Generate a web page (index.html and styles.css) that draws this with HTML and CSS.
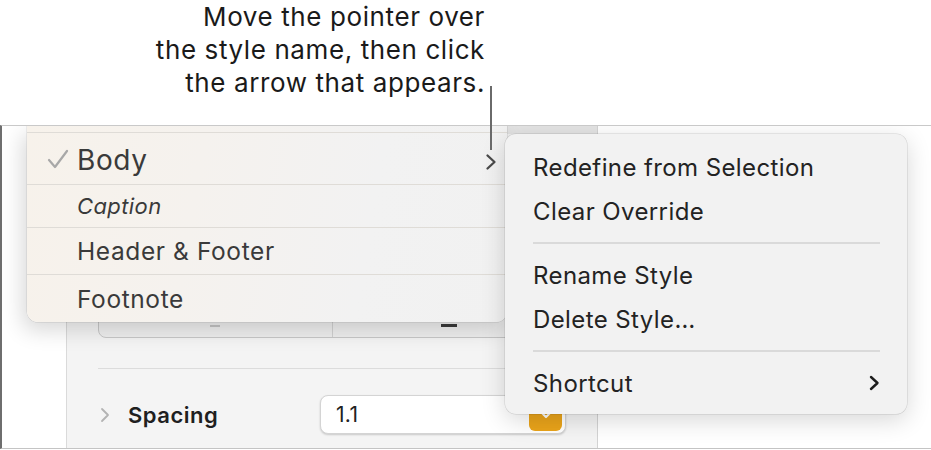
FILE: index.html
```html
<!DOCTYPE html>
<html lang="en">
<head>
<meta charset="utf-8">
<title>Style menu</title>
<link rel="stylesheet" href="styles.css">
</head>
<body>
<div class="page">
  <div class="callout">
    <p class="callout-text">Move the pointer over<br>the style name, then click<br>the arrow that appears.</p>
  </div>
  <div class="callout-line"></div>

  <div class="shot">
    <div class="inspector">
      <div class="stepper">
        <div class="stepper-half"><span class="dash dash-light"></span></div>
        <div class="stepper-half"><span class="dash dash-dark"></span></div>
      </div>
      <div class="rule"></div>
      <div class="spacing-row">
        <div class="spacing-label">
          <svg class="disclosure" width="10" height="16" viewBox="0 0 10 16"><path d="M2 2 L8 8 L2 14" fill="none" stroke="#b3b3b3" stroke-width="1.8" stroke-linecap="round" stroke-linejoin="round"/></svg>
          <span>Spacing</span>
        </div>
        <div class="field">
          <span class="field-value">1.1</span>
          <span class="field-btn">
            <svg width="14" height="9" viewBox="0 0 14 9"><path d="M2 2 L7 7 L12 2" fill="none" stroke="#fff" stroke-width="2.2" stroke-linecap="round" stroke-linejoin="round"/></svg>
          </span>
        </div>
      </div>
    </div>

    <div class="style-menu">
      <div class="style-row style-prev"></div>
      <div class="style-row style-body">
        <svg class="check" width="22" height="22" viewBox="0 0 22 22"><path d="M2 12 L8 19 L20 3" fill="none" stroke="#a8a8a8" stroke-width="2.2" stroke-linecap="round" stroke-linejoin="round"/></svg>
        <span class="style-name">Body</span>
        <svg class="row-arrow" width="12" height="18" viewBox="0 0 12 18"><path d="M2.5 2.5 L9.5 9 L2.5 15.5" fill="none" stroke="#4a4a4a" stroke-width="2.3" stroke-linecap="round" stroke-linejoin="round"/></svg>
      </div>
      <div class="style-row style-caption"><span class="style-name">Caption</span></div>
      <div class="style-row style-header"><span class="style-name">Header &amp; Footer</span></div>
      <div class="style-row style-footnote"><span class="style-name">Footnote</span></div>
    </div>

    <div class="submenu">
      <div class="sub-item">Redefine from Selection</div>
      <div class="sub-item">Clear Override</div>
      <div class="sub-sep"></div>
      <div class="sub-item">Rename Style</div>
      <div class="sub-item">Delete Style…</div>
      <div class="sub-sep"></div>
      <div class="sub-item sub-item-more">
        <span>Shortcut</span>
        <svg width="12" height="18" viewBox="0 0 12 18"><path d="M3 3 L9.5 9 L3 15" fill="none" stroke="#1e1e1e" stroke-width="2.4" stroke-linecap="round" stroke-linejoin="round"/></svg>
      </div>
    </div>
  </div>
</div>
</body>
</html>
```

FILE: styles.css
```css
* { box-sizing: border-box; }

html, body {
  margin: 0;
  padding: 0;
  background: #ffffff;
}

body {
  font-family: "Inter", "Liberation Sans", sans-serif;
  color: #1f1f1f;
  width: 931px;
  height: 450px;
  overflow: hidden;
}

.page {
  position: relative;
  width: 931px;
  height: 450px;
}

/* ---------- callout ---------- */
.callout {
  height: 125px;
  display: flex;
  justify-content: flex-start;
}

.callout-text {
  margin: 0;
  width: 485px;
  padding-top: 0;
  text-align: right;
  font-size: 26px;
  line-height: 33px;
  color: #1a1a1a;
  letter-spacing: 0.6px;
}

.callout-line {
  position: absolute;
  left: 490px;
  top: 86px;
  width: 2px;
  height: 64px;
  background: #6a6a6a;
  z-index: 5;
}

/* ---------- screenshot frame ---------- */
.shot {
  position: relative;
  height: 324px;
  border-top: 1px solid #c9c9c9;
  border-left: 2px solid #6e6e6e;
  border-bottom: 1px solid #c4c4c4;
  overflow: hidden;
  background: #ffffff;
}

.inspector {
  margin-left: 64px;
  width: 532px;
  height: 100%;
  background: linear-gradient(#e4e4e4 0, #e4e4e4 8px, #f4f4f4 8px);
  border-left: 1px solid #dadada;
  border-right: 1px solid #d3d3d3;
  padding: 154px 31px 0 31px;
  display: flex;
  flex-direction: column;
}

.stepper {
  height: 58px;
  display: flex;
  background: #efefef;
  border: 1px solid #c8c8c8;
  border-radius: 8px;
}

.stepper-half {
  flex: 1;
  display: flex;
  justify-content: center;
  align-items: flex-end;
  padding-bottom: 10px;
}

.stepper-half + .stepper-half {
  border-left: 1px solid #d2d2d2;
}

.dash {
  display: block;
  height: 2px;
}

.dash-light {
  width: 10px;
  background: #c4c4c4;
}

.dash-dark {
  width: 16px;
  height: 3px;
  background: #3a3a3a;
}

.rule {
  margin-top: 30px;
  height: 1px;
  background: #dcdcdc;
}

.spacing-row {
  margin-top: 26px;
  height: 39px;
  display: flex;
  align-items: center;
  justify-content: space-between;
}

.spacing-label {
  display: flex;
  align-items: center;
  gap: 18px;
  font-size: 22px;
  font-weight: 600;
  letter-spacing: 0.5px;
  color: #1f1f1f;
  padding-left: 2px;
}

.field {
  width: 246px;
  height: 39px;
  background: #ffffff;
  border-radius: 8px;
  border: 0.5px solid #d4d4d4;
  box-shadow: 0 1px 2px rgba(0, 0, 0, 0.18);
  display: flex;
  align-items: center;
  justify-content: space-between;
  padding: 0 3px 0 15px;
}

.field-value {
  font-size: 21px;
  letter-spacing: 0.3px;
  color: #222;
}

.field-btn {
  width: 33px;
  height: 33px;
  border-radius: 6px;
  background: #eaa41a;
  display: flex;
  align-items: center;
  justify-content: center;
}

/* ---------- style list menu ---------- */
.style-menu {
  position: absolute;
  left: 25px;
  top: 0;
  width: 480px;
  border-radius: 0 0 11px 11px;
  background: linear-gradient(100deg, #f7f2eb 0%, #f5f2ee 35%, #f2f2f2 70%, #f1f1f1 100%);
  box-shadow: -4px 8px 22px rgba(0, 0, 0, 0.16), 0 0 0 0.5px rgba(0, 0, 0, 0.12);
  z-index: 3;
}

.style-row {
  display: flex;
  align-items: center;
  padding-left: 50px;
  border-bottom: 1px solid #dfdcd7;
  color: #3a3a3a;
  position: relative;
}

.style-prev { height: 7px; }
.style-body { height: 52px; font-size: 28px; letter-spacing: 0.6px; padding-top: 2px; }
.style-caption { height: 43px; font-size: 22px; letter-spacing: 0.4px; font-style: italic; }
.style-header { height: 47px; font-size: 24.5px; letter-spacing: 0.6px; }
.style-footnote { height: 47px; font-size: 24.5px; letter-spacing: 0.6px; border-bottom: none; }

.check {
  position: absolute;
  left: 20px;
  top: 15px;
}

.row-arrow {
  position: absolute;
  right: 10px;
  top: 20px;
}

/* ---------- submenu ---------- */
.submenu {
  position: absolute;
  left: 503px;
  top: 8px;
  width: 402px;
  height: 280px;
  padding: 11px 27px 0 28px;
  background: #f2f2f2;
  border-radius: 11px;
  box-shadow: 0 6px 24px rgba(0, 0, 0, 0.16), 0 0 0 0.5px rgba(0, 0, 0, 0.14);
  z-index: 4;
}

.sub-item {
  height: 44px;
  display: flex;
  align-items: center;
  font-size: 24px;
  letter-spacing: 0.4px;
  color: #232323;
}

.sub-item-more {
  justify-content: space-between;
}

.sub-sep {
  height: 20px;
  display: flex;
  align-items: center;
}

.sub-sep::before {
  content: "";
  display: block;
  width: 100%;
  height: 1.5px;
  background: #dadada;
}
```
